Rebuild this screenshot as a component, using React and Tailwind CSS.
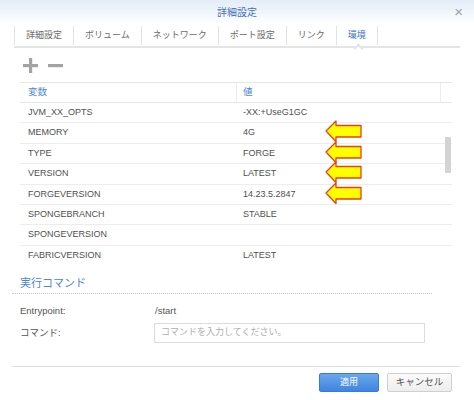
import React from 'react';

const tabs = ['詳細設定', 'ボリューム', 'ネットワーク', 'ポート設定', 'リンク', '環境'];

const rows = [
  { name: 'JVM_XX_OPTS', value: '-XX:+UseG1GC' },
  { name: 'MEMORY', value: '4G', arrow: true },
  { name: 'TYPE', value: 'FORGE', arrow: true },
  { name: 'VERSION', value: 'LATEST', arrow: true },
  { name: 'FORGEVERSION', value: '14.23.5.2847', arrow: true },
  { name: 'SPONGEBRANCH', value: 'STABLE' },
  { name: 'SPONGEVERSION', value: '' },
  { name: 'FABRICVERSION', value: 'LATEST' },
];

function Arrow() {
  // yellow callout arrow pasted over the screenshot
  return (
    <svg width="38" height="24" viewBox="0 0 38 24" className="absolute left-[305px] top-[-3px]">
      <polygon
        points="1,11 11,1 11,5.5 36,5.5 36,17 11,17 11,21.5"
        fill="#ffff00"
        stroke="#e8401c"
        strokeWidth="1.3"
        strokeLinejoin="round"
      />
    </svg>
  );
}

function App() {
  return (
    <div className="w-[474px] h-[400px] bg-white overflow-hidden font-['Liberation_Sans','Noto_Sans_CJK_JP',sans-serif] text-[#555]">
      {/* title bar */}
      <div className="relative h-[24px] bg-gradient-to-b from-[#e3ecf8] to-white flex items-center justify-center">
        <span className="text-[10px] text-[#3f6fbf] mt-[1px]">詳細設定</span>
        <span className="absolute right-[11px] top-[4px] text-[15px] leading-none text-[#9aa3ad] font-light">×</span>
      </div>

      {/* tabs */}
      <div className="relative mx-[14px] mt-[1px] h-[23px] border-b-2 border-[#e4e4e4] flex">
        <div className="w-px h-[19px] bg-[#e2e2e2] mt-[1px]" />
        {tabs.map((t, i) => (
          <div key={t} className="relative flex items-start">
            <div className={`px-[11px] pt-[4px] text-[9px] ${i === 5 ? 'text-[#3e74c8]' : 'text-[#6b6b6b]'}`}>{t}</div>
            <div className="w-px h-[19px] bg-[#e2e2e2] mt-[1px]" />
            {i === 5 && (
              <div className="absolute left-[18px] bottom-[-6px] w-[7px] h-[7px] bg-white border-l-2 border-t-2 border-[#e4e4e4] rotate-45" />
            )}
          </div>
        ))}
      </div>

      {/* toolbar */}
      <div className="flex items-center gap-[10px] pl-[23px] h-[34px]">
        <svg width="15" height="15" viewBox="0 0 15 15">
          <rect x="6" y="0" width="3.2" height="15" fill="#a3a3a3" />
          <rect x="0" y="6" width="15" height="3.2" fill="#a3a3a3" />
        </svg>
        <svg width="15" height="15" viewBox="0 0 15 15">
          <rect x="0" y="6" width="15" height="3.2" fill="#a3a3a3" />
        </svg>
      </div>

      {/* grid */}
      <div className="relative mx-[20px] w-[432px] h-[183px] overflow-hidden border-t border-[#e6e6e6]">
        <div className="flex h-[20px] border-b border-[#e6e6e6] text-[9.5px] text-[#4f87d6]">
          <div className="w-[217px] pl-[8px] flex items-center border-r border-[#ececec]">変数</div>
          <div className="w-[204px] pl-[6px] flex items-center border-r border-[#ececec]">値</div>
          <div className="flex-1" />
        </div>
        {rows.map((r) => (
          <div key={r.name} className="relative flex items-center h-[20.4px] border-b border-[#ededed] text-[9px] text-[#505050]">
            <div className="w-[217px] pl-[8px]">{r.name}</div>
            <div className="pl-[6px]">{r.value}</div>
            {r.arrow && <Arrow />}
          </div>
        ))}
        <div className="absolute right-[1px] top-[54px] w-[6px] h-[36px] bg-[#d4d4d4]" />
      </div>

      {/* run command */}
      <div className="mx-[12px] mt-[11px] w-[420px] h-[18px] border-b border-dotted border-[#c8c8c8] pl-[8px] text-[11px] text-[#4f87d6] leading-[14px]">
        実行コマンド
      </div>
      <div className="flex items-center h-[14px] mt-[10px] pl-[20px] text-[9.5px] text-[#555]">
        <div className="w-[135px]">Entrypoint:</div>
        <div>/start</div>
      </div>
      <div className="flex items-center mt-[5px] pl-[20px] text-[9.5px] text-[#555]">
        <div className="w-[134px]">コマンド:</div>
        <div className="w-[271px] h-[20px] border border-[#dcdcdc] flex items-center pl-[6px] text-[9px] text-[#aeaeae]">
          コマンドを入力してください。
        </div>
      </div>

      {/* footer */}
      <div className="mx-[12px] mt-[23px] w-[448px] border-t border-[#dedede]" />
      <div className="flex justify-end gap-[8px] pr-[22px] mt-[6px]">
        <div className="w-[60px] h-[19px] rounded-[2px] bg-gradient-to-b from-[#6aa7ec] to-[#3f84e0] border border-[#3a7bd6] flex items-center justify-center text-[9px] text-white">
          適用
        </div>
        <div className="w-[65px] h-[19px] rounded-[2px] bg-gradient-to-b from-[#fbfbfb] to-[#eeeeee] border border-[#cfcfcf] flex items-center justify-center text-[9.5px] text-[#555]">
          キャンセル
        </div>
      </div>
    </div>
  );
}

export default App;
